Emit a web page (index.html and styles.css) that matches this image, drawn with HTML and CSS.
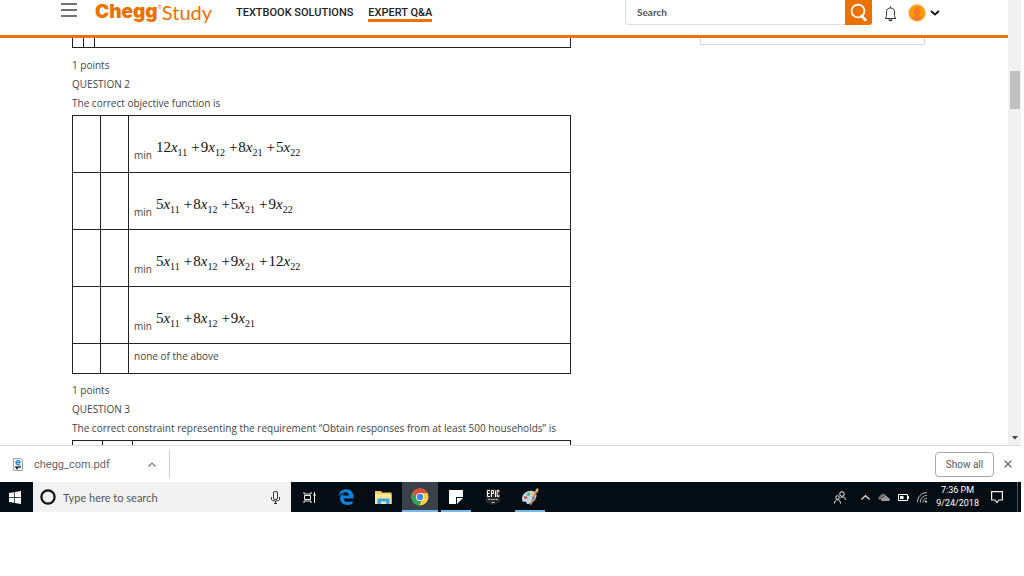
FILE: index.html
```html
<!DOCTYPE html>
<html lang="en">
<head>
<meta charset="utf-8">
<title>Chegg Study</title>
<link rel="stylesheet" href="styles.css">
</head>
<body>
<div class="browser">
  <div class="page">
    <header class="header">
      <button class="icon-button menu" aria-label="Menu">
        <svg width="16" height="14" viewBox="0 0 16 14"><path d="M0 1h16M0 7h16M0 13h16" stroke="#444" stroke-width="1.5"/></svg>
      </button>
      <a class="logo" href="#"><b>Chegg</b><i>®</i><span>Study</span></a>
      <nav class="nav">
        <a href="#">TEXTBOOK SOLUTIONS</a>
        <a class="current" href="#">EXPERT Q&amp;A</a>
      </nav>
      <form class="search">
        <input type="text" placeholder="Search" aria-label="Search">
        <button type="button" aria-label="Submit search">
          <svg width="18" height="20" viewBox="0 0 18 20" fill="none" stroke="#fff"><circle cx="8" cy="8" r="6.4" stroke-width="1.8"/><path d="M11.5 13l4 4" stroke-width="2.6" stroke-linecap="round"/></svg>
        </button>
      </form>
      <button class="icon-button bell" aria-label="Notifications">
        <svg width="13" height="16" viewBox="0 0 13 16" fill="none" stroke="#333"><path d="M1 12.5h11c-1.400-1-1.500-2-1.500-4.500V6c0-2.500-1.500-4-4-4s-4 1.500-4 4v2c0 2.500-.1 3.500-1.500 4.500zM6.500 2V.5"/><path d="M5 13.500c.3 1.300 2.700 1.300 3 0" stroke-width="1.400"/></svg>
      </button>
      <button class="icon-button account" aria-label="Account">
        <svg width="18" height="18" viewBox="0 0 18 18"><circle cx="9" cy="9" r="8.500" fill="#ff9d00" stroke="#e3c7c0" stroke-width=".5"/><path d="M5.500 7c0-5 7-5 7 0 0 2-.6 3.200-1.600 4 .2 1.500 2.300 1.400 3.300 2.600-2.600 4-8 4-10.500 0 1-1.200 3.200-1.100 3.400-2.600-1-.8-1.600-2-1.600-4z" fill="#f47b2c"/></svg>
        <svg width="10" height="6" viewBox="0 0 10 6" fill="none" stroke="#111" stroke-width="1.800"><path d="M1 1l4 3.500L9 1"/></svg>
      </button>
    </header>
    <main class="main">
      <section class="content">
        <table class="answers previous"><tr><td></td><td></td><td></td></tr></table>
        <p>1 points</p>
        <p>QUESTION 2</p>
        <p>The correct objective function is</p>
        <table class="answers">
          <tr class="tall"><td></td><td></td><td><div class="option">min <span class="formula">12<i>x</i><sub>11</sub><b>+</b>9<i>x</i><sub>12</sub><b>+</b>8<i>x</i><sub>21</sub><b>+</b>5<i>x</i><sub>22</sub></span></div></td></tr>
          <tr class="tall"><td></td><td></td><td><div class="option">min <span class="formula">5<i>x</i><sub>11</sub><b>+</b>8<i>x</i><sub>12</sub><b>+</b>5<i>x</i><sub>21</sub><b>+</b>9<i>x</i><sub>22</sub></span></div></td></tr>
          <tr class="tall"><td></td><td></td><td><div class="option">min <span class="formula">5<i>x</i><sub>11</sub><b>+</b>8<i>x</i><sub>12</sub><b>+</b>9<i>x</i><sub>21</sub><b>+</b>12<i>x</i><sub>22</sub></span></div></td></tr>
          <tr class="tall"><td></td><td></td><td><div class="option">min <span class="formula">5<i>x</i><sub>11</sub><b>+</b>8<i>x</i><sub>12</sub><b>+</b>9<i>x</i><sub>21</sub></span></div></td></tr>
          <tr class="short"><td></td><td></td><td>none of the above</td></tr>
        </table>
        <p>1 points</p>
        <p>QUESTION 3</p>
        <p>The correct constraint representing the requirement “Obtain responses from at least 500 households” is</p>
        <table class="answers next"><tr class="tall"><td></td><td></td><td></td></tr></table>
      </section>
      <aside class="side-card"></aside>
    </main>
  </div>
  <div class="scrollbar">
    <span class="thumb"></span>
    <svg class="arrow" width="13" height="15" viewBox="0 0 13 15"><path d="M4 6h6L7 9.500z" fill="#444"/></svg>
  </div>
</div>

<div class="downloads">
  <div class="file">
    <svg width="10" height="13" viewBox="0 0 10 13"><path d="M.5.5h7l2 2v10h-9z" fill="#f4f6f7" stroke="#9aa5aa"/><path d="M3 4.600h4C7 2 3 2 3 4.600s3 2.500 3.800 1.400" fill="none" stroke="#1d8fdc" stroke-width="1.300"/><path d="M2 9h6M3 10.500h2" stroke="#333" stroke-width="1.300"/></svg>
    <span>chegg_com.pdf</span>
    <button class="icon-button" aria-label="File options"><svg width="8" height="5" viewBox="0 0 8 5" fill="none" stroke="#777" stroke-width="1.200"><path d="M.5 4.500L4 1l3.500 3.500"/></svg></button>
  </div>
  <button class="show-all">Show all</button>
  <button class="icon-button" aria-label="Close"><svg width="8" height="8" viewBox="0 0 8 8" stroke="#777" stroke-width="1.600"><path d="M.7.7l6.600 6.600M7.300.7L.7 7.300"/></svg></button>
</div>

<footer class="taskbar">
  <button class="task start" aria-label="Start"><svg width="12" height="13" viewBox="0 0 12 13" fill="#fff"><path d="M0 2l5-.8V6H0zM5.700 1L12 0v6H5.700zM0 6.800h5v4.900L0 11zM5.700 6.800H12V13l-6.300-1z"/></svg></button>
  <label class="cortana">
    <svg width="16" height="16" viewBox="0 0 16 16"><circle cx="8" cy="8" r="6.600" fill="none" stroke="#111" stroke-width="2.200"/></svg>
    <input type="text" placeholder="Type here to search" aria-label="Type here to search">
    <svg width="9" height="13" viewBox="0 0 9 13" fill="none" stroke="#333"><rect x="2.500" y=".5" width="4" height="8" rx="1.500"/><path d="M.5 6v2.500c0 2 8 2 8 0V6M4.500 10v2.500M3 12.500h3"/></svg>
  </label>
  <button class="task" aria-label="Task view"><svg width="13" height="11" viewBox="0 0 13 11" fill="none" stroke="#eee"><path d="M1 0v2h7V0M1 11V9h7v2M1.500 3.500v4h6v-4zM11.500 0v11"/><path d="M10.500 3h2" stroke-width="2"/></svg></button>
  <button class="task" aria-label="Edge"><svg width="16" height="16" viewBox="0 0 16 16"><path d="M.4 7.300C1.200 2.500 4.300.2 8.200.2c4.600 0 7.400 3.300 7.400 7.600v1.600H5.500c.2 3.800 5.300 4.500 9 2.300v3.100C9 17.500 2 15.400 2 9.600 2 6.800 3.500 5 5.900 3.900c-.7.8-1 1.500-1.100 2.500h6C11.300 2 4 2.200.4 7.300z" fill="#0a84dd"/></svg></button>
  <button class="task" aria-label="File Explorer"><svg width="17" height="15" viewBox="0 0 17 15"><path d="M0 1h6l1 1.500h9.500V14H0z" fill="#f2cd66"/><path d="M0 4h16.500v10H0z" fill="#ffe69a"/><path d="M2.500 14V8.500h12V14h-3.300v-2.500H5.800V14z" fill="#37a6e4"/></svg></button>
  <button class="task active open" aria-label="Chrome"><svg width="18" height="18" viewBox="0 0 18 18"><circle cx="9" cy="9" r="8.500" fill="#ffcd40"/><path d="M1.600 4.800A8.500 8.500 0 0 1 16.400 5H9L5.500 11z" fill="#de4b3d"/><path d="M1.600 4.800L5.500 11c1 1.800 3 2.300 5 1.800L8.300 17.500A8.500 8.500 0 0 1 1.600 4.800z" fill="#30a35a"/><circle cx="9" cy="9" r="4" fill="#fff"/><circle cx="9" cy="9" r="3.200" fill="#4285f4"/></svg></button>
  <button class="task open" aria-label="Sticky Notes"><svg width="14" height="14" viewBox="0 0 14 14"><path d="M0 0h14v7H7v7H0z" fill="#fff"/><path d="M8 8h6l-6 6z" fill="#fff"/></svg></button>
  <button class="task" aria-label="Epic Games"><svg width="14" height="16" viewBox="0 0 14 16"><path d="M0 0h14v13l-7 3-7-3z" fill="#292929"/><path d="M4 1.500H1.500v6H4M1.500 4.500h2M5.500 8V1.500h2v3h-2M9.500 1.500V8M12.800 3V1.500h-1.600v6h1.600V6" fill="none" stroke="#fff"/><path d="M2 10.500h10" stroke="#bbb" stroke-dasharray="2 .6"/><path d="M5 13h4l-2 1z" fill="#fff"/></svg></button>
  <button class="task open" aria-label="Paint"><svg width="18" height="18" viewBox="0 0 18 18"><path d="M1 11C1 5 7 2 12 3c5 1.500 4 7 1 10-3 3-7 4-7.500 2 0-2-1.500-1-3-1.200C1.500 13.500 1 12.500 1 11z" fill="#b9d9e8"/><circle cx="4.500" cy="9.500" r="1.600" fill="#e25346"/><circle cx="7.500" cy="6.200" r="1.600" fill="#5bb25c"/><circle cx="11.500" cy="5.500" r="1.400" fill="#f0c13b"/><circle cx="12.500" cy="10" r="1.600" fill="#3577b8"/><path d="M15 4L9.500 17" stroke="#d9782c" stroke-width="1.600"/><path d="M14 4l1-3 2-1 .5 3-2 2z" fill="#d8ae6f"/></svg></button>
  <div class="tray">
    <svg class="people" width="12" height="13" viewBox="0 0 12 13" fill="none" stroke="#eee"><circle cx="8" cy="3" r="2.300"/><circle cx="3.500" cy="6.500" r="1.800"/><path d="M.5 12.500c0-5 6-5 6 0M6.500 7c2-2 4.800-1 4.900 2"/></svg>
    <svg width="9" height="6" viewBox="0 0 9 6" fill="none" stroke="#eee" stroke-width="1.200"><path d="M.5 5.500l4-4 4 4"/></svg>
    <svg width="12" height="8" viewBox="0 0 12 8"><path d="M2 7C-.5 6 0 3.500 2 3.500 2.500 0 7 0 8 2.500L4.500 4z" fill="#777"/><path d="M4 8C2 7 3 4.500 5 4.700c1-2.500 4.500-2 5 0C12.500 5 12.500 8 10.500 8z" fill="#999"/></svg>
    <svg width="11" height="7" viewBox="0 0 11 7"><path d="M.5.5h9v6h-9z" fill="none" stroke="#fff"/><path d="M2 2h3.500v3H2zM10 2h1v3h-1z" fill="#fff"/></svg>
    <svg width="11" height="11" viewBox="0 0 11 11" fill="none" stroke="#bbb"><path d="M.5 10C.5 4.500 4.500.6 10 .6M3.300 10.500c0-4 3-7 6.700-7M6 10.500c0-2.500 1.700-4.300 4-4.300"/><circle cx="9" cy="9.500" r="1" fill="#fff" stroke="none"/></svg>
    <div class="clock"><span>7:36 PM</span><span>9/24/2018</span></div>
    <svg width="12" height="13" viewBox="0 0 12 13" fill="none" stroke="#eee" stroke-width="1.200"><path d="M.6.600h10.800v8.400H8L6 11.500 4 9H.6z"/></svg>
  </div>
  <span class="peek"></span>
</footer>
</body>
</html>
```
FILE: styles.css
```css
* { box-sizing: border-box; }
body {
  margin: 0;
  height: 100vh;
  padding: 0 3px 64px 0;
  display: flex;
  flex-direction: column;
  background: #fff;
  color: #444;
  font-family: Lato, sans-serif;
  font-size: 11px;
  overflow: hidden;
}
button, input { font: inherit; color: inherit; border: 0; background: none; padding: 0; }
svg { display: block; flex: none; }
a { color: inherit; text-decoration: none; }

.browser { flex: 1; min-height: 0; display: flex; }
.page { flex: 1; min-width: 0; display: flex; flex-direction: column; }
.icon-button { display: flex; align-items: center; }

.header {
  flex: none;
  height: 38px;
  padding: 0 68px 0 61px;
  border-bottom: 3px solid #ea7404;
  display: flex;
  align-items: flex-start;
}
.menu { margin-top: 3px; }
.logo { display: flex; width: 118px; margin-left: 18px; color: #eb7100; font-size: 20px; line-height: 24px; }
.logo b { font-family: Inter, sans-serif; font-size: 19px; font-weight: 900; line-height: 23px; }
.logo i { font-size: 5px; font-style: normal; line-height: 14px; }
.nav { display: flex; gap: 15px; margin: 6px auto 0 23px; color: #222; font-family: Roboto, sans-serif; font-weight: 500; line-height: 13px; }
.nav a { border-bottom: 3px solid transparent; }
.nav .current { border-bottom-color: #eb7100; }
.search { display: flex; width: 247px; height: 25px; }
.search input {
  flex: 1;
  min-width: 0;
  padding-left: 11px;
  border: 1px solid #ddd;
  border-width: 0 0 1px 1px;
  border-bottom-left-radius: 4px;
  font-size: 10px;
  font-weight: 700;
}
.search button {
  width: 27px;
  background: #eb7100;
  border-bottom-right-radius: 3px;
  display: grid;
  place-items: center;
}
::placeholder { color: #555; opacity: 1; }
.bell { margin: 6px 0 0 12px; }
.account { gap: 4px; margin: 4px 0 0 11px; }

.main { flex: 1; min-height: 0; overflow: hidden; display: flex; justify-content: space-between; padding: 0 83px 0 72px; }
.content { width: 499px; font-family: "Open Sans", sans-serif; font-size: 10px; }
.content p { margin: 0; line-height: 19px; white-space: nowrap; }
.answers { width: 100%; table-layout: fixed; border-collapse: collapse; margin: 2px 0 7px; }
.answers td { border: 1px solid #222; padding: 0 5px; }
.answers td:nth-child(-n+2) { width: 28px; padding: 0; }
.previous { margin-top: 0; margin-bottom: 8px; }
.previous td { height: 9px; border-top: 0; }
.previous td:nth-child(-n+2) { width: 11px; }
.next td:nth-child(-n+2) { width: 30px; }
.tall { height: 57px; }
.short { height: 30px; }
.short td { padding-bottom: 5px; }
.option { display: flex; align-items: flex-end; gap: 4px; padding-top: 12px; line-height: 13px; }
.formula { padding-bottom: 6px; color: #111; font-family: "Liberation Serif", serif; font-size: 15px; line-height: 18px; }
.formula b { margin: 0 1px 0 4px; font-weight: 400; }
.formula sub { font-size: 10px; line-height: 0; vertical-align: -4px; }
.side-card { width: 225px; height: 7px; border: 1px solid #d6d9dc; border-top: 0; }

.scrollbar { width: 13px; background: #f1f1f1; display: flex; flex-direction: column; justify-content: space-between; padding-top: 71px; }
.thumb { height: 38px; margin: 0 1px 0 2px; background: #c1c1c1; }

.downloads {
  flex: none;
  height: 37px;
  display: flex;
  align-items: center;
  border-top: 1px solid #ddd;
  padding: 0 9px 0 13px;
  color: #666;
  font-family: Roboto, sans-serif;
}
.file { display: flex; align-items: center; gap: 11px; width: 157px; height: 28px; padding-right: 13px; margin-right: auto; border-right: 1px solid #ccc; }
.file .icon-button { margin-left: auto; }
.show-all { width: 59px; height: 25px; margin-right: 10px; border: 1px solid #aaa; border-radius: 4px; font-size: 10px; color: #556; }

.taskbar { flex: none; height: 30px; background: #050d14; display: flex; color: #fff; }
.task { width: 36px; margin-right: 1px; display: grid; place-items: center; border-top: 2px solid transparent; border-bottom: 2px solid transparent; }
.start { width: 33px; margin: 0; padding-right: 4px; }
.open { width: 30px; margin: 0 4px 0 3px; border-bottom-color: #76b9ed; }
.active { width: 36px; margin: 0; background: #3a4148; }
.cortana { display: flex; align-items: center; width: 258px; padding: 0 11px 0 7px; background: #f2f2f2; color: #333; }
.cortana input { flex: 1; min-width: 0; padding-left: 7px; font-size: 11px; }
.tray { display: flex; align-items: center; gap: 8px; margin-left: auto; }
.people { margin-right: 7px; }
.clock { display: flex; flex-direction: column; align-items: center; margin-right: 4px; font-family: Roboto, sans-serif; font-size: 9px; line-height: 13px; }
.peek { width: 1px; margin: 0 3px 0 14px; background: #555; }
```
